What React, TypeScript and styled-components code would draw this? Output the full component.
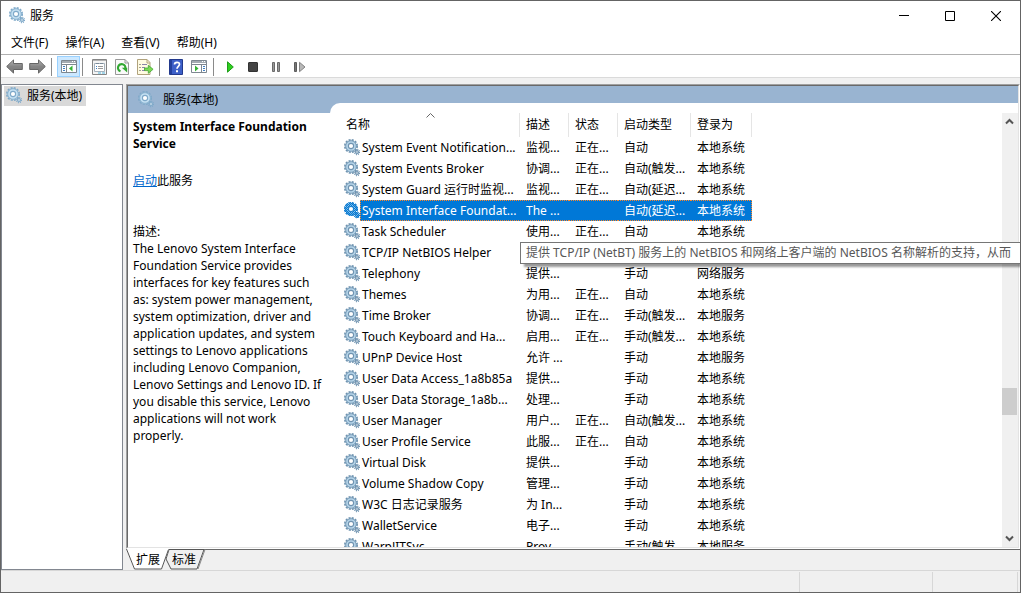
import React from "react";
import styled, { createGlobalStyle, css } from "styled-components";

const GlobalStyle = createGlobalStyle`
  * { box-sizing: border-box; }
  body {
    margin: 0;
    overflow: hidden;
    background: #f0f0f0;
    color: #000;
    font: 12px/17px "Noto Sans", "Noto Sans CJK SC", sans-serif;
  }
  button {
    margin: 0;
    padding: 0;
    border: 0;
    background: none;
    color: inherit;
    font: inherit;
  }
`;

const Window = styled.div`
  position: relative;
  display: flex;
  flex-direction: column;
  height: 100vh;
  overflow: hidden;
  border: 1px solid #646464;
`;

const TitleBar = styled.header`
  display: flex;
  align-items: center;
  height: 30px;
  padding: 0 1px 1px 8px;
  background: #fff;
`;

const Title = styled.h1`
  flex: 1;
  margin: 0 0 0 5px;
  font-size: 12px;
  font-weight: 400;
`;

const CaptionButton = styled.button`
  display: grid;
  place-items: center;
  width: 46px;
  height: 29px;
`;

const MenuBar = styled.nav`
  display: flex;
  gap: 1px;
  height: 24px;
  padding-left: 2px;
  background: #fff;
  border-bottom: 1px solid #b0b0b0;
`;

const MenuItem = styled.button`
  padding: 0 8px;
`;

const Toolbar = styled.div`
  display: flex;
  height: 23px;
  padding: 1px 0 0 2px;
  background: #fff;
  border-bottom: 1px solid #dadada;
`;

const ToolButton = styled.button<{ $pressed?: boolean }>`
  display: grid;
  place-items: center;
  width: 23px;
  height: 21px;
  padding-right: 1px;
  ${(p) =>
    p.$pressed &&
    css`
      padding-right: 0;
      background: #cce8ff;
      border: 1px solid #99d1ff;
    `}
`;

const Separator = styled.span`
  width: 8px;
  border-left: 2px solid transparent;
  &::before {
    content: "";
    display: block;
    width: 1px;
    height: 18px;
    margin-top: 2px;
    background: #8a8a8a;
  }
`;

const Main = styled.div`
  flex: 1;
  display: flex;
  gap: 3px;
  min-height: 0;
  padding-top: 6px;
`;

const Tree = styled.nav`
  width: 122px;
  padding: 1px 2px;
  background: #fff;
  border: 1px solid #828790;
`;

const TreeItem = styled.button`
  display: flex;
  align-items: center;
  gap: 5px;
  height: 20px;
  padding: 0 4px 1px 2px;
  background: #d9d9d9;
`;

const Content = styled.div`
  flex: 1;
  display: flex;
  flex-direction: column;
  min-width: 0;
`;

const Frame = styled.section`
  flex: 1;
  display: flex;
  min-height: 0;
  background: #fff;
  border: 1px solid;
  border-color: #a0a0a0 #fff #fff #a0a0a0;
`;

const FrameInner = styled.div`
  flex: 1;
  display: flex;
  min-width: 0;
  border: 1px solid;
  border-color: #696969 #e3e3e3 #e3e3e3 #696969;
`;

const Details = styled.aside`
  width: 202px;
  flex: none;
`;

const DetailsHeader = styled.div`
  display: flex;
  align-items: center;
  gap: 9px;
  height: 27px;
  padding-left: 10px;
  background: #99b4d1;
`;

const DetailsBody = styled.div`
  padding: 5px 0 0 5px;
`;

const ServiceName = styled.h2`
  margin: 0 0 20px;
  font-size: 12px;
  font-weight: 700;
`;

const Action = styled.p`
  margin: 0 0 34px;
  a {
    color: #0066cc;
  }
`;

const Description = styled.p`
  margin: 0;
  white-space: pre-line;
`;

const ListArea = styled.div`
  flex: 1;
  display: flex;
  min-width: 0;
  padding-top: 17px;
  background: #99b4d1;
`;

const ListSheet = styled.div`
  flex: 1;
  display: flex;
  justify-content: space-between;
  min-width: 0;
  padding: 10px 0 0 10px;
  overflow: hidden;
  background: #fff;
  border-top-left-radius: 10px;
`;

const Table = styled.table`
  width: 412px;
  height: max-content;
  table-layout: fixed;
  border-collapse: separate;
  border-spacing: 0;
`;

const Heading = styled.th`
  position: relative;
  height: 24px;
  padding: 0 0 1px 6px;
  border-right: 1px solid #e5e5e5;
  font-weight: 400;
  text-align: left;
  white-space: nowrap;
`;

const SortMark = styled.svg`
  position: absolute;
  top: 0;
  left: calc(50% - 4px);
`;

const Cell = styled.td`
  height: 21px;
  padding: 0;
`;

const NameCell = styled.div`
  display: flex;
  padding-left: 4px;
`;

const focusDots = "repeating-linear-gradient(90deg, #ff8728 0 1px, #0078d7 1px 2px)";
const focusDotsDown = "repeating-linear-gradient(180deg, #ff8728 0 1px, #0078d7 1px 2px)";

const Label = styled.div<{ $selected?: boolean; $edge?: "left" | "right"; $name?: boolean }>`
  flex: 1;
  height: 21px;
  padding: 2px 0 2px ${(p) => (p.$name ? 2 : 6)}px;
  overflow: hidden;
  white-space: nowrap;
  ${(p) =>
    p.$selected &&
    css`
      color: #fff;
      background:
        ${focusDots} top / 100% 1px no-repeat,
        ${focusDots} bottom / 100% 1px no-repeat,
        ${focusDotsDown} ${p.$edge ?? "left"} / ${p.$edge ? "1px" : "0"} 100% no-repeat,
        #0078d7;
    `}
`;

const ScrollBar = styled.div`
  display: flex;
  flex-direction: column;
  width: 16px;
  background: #f0f0f0;
`;

const ScrollArrow = styled.button`
  display: grid;
  place-items: center;
  width: 15px;
  height: 17px;
`;

const ScrollSpace = styled.div<{ $share: number }>`
  flex: ${(p) => p.$share} 1 0;
`;

const ScrollThumb = styled.div`
  width: 15px;
  height: 27px;
  background: #cdcdcd;
`;

const Tabs = styled.div`
  position: relative;
  display: flex;
  gap: 12px;
  height: 21px;
  padding-left: 10px;
`;

const TabShape = styled.svg`
  position: absolute;
  top: 0;
  left: 0;
`;

const TabRule = styled.div`
  position: absolute;
  top: 0;
  left: 42px;
  right: 0;
  height: 1px;
  background: #696969;
`;

const Tab = styled.button`
  position: relative;
`;

const StatusBar = styled.footer`
  display: flex;
  justify-content: flex-end;
  height: 22px;
  padding: 1px 2px 0 0;
  border-top: 1px solid #d7d7d7;
`;

const StatusCell = styled.div<{ $width: number }>`
  width: ${(p) => p.$width}px;
  border-right: 1px solid #d7d7d7;
`;

const Tooltip = styled.div`
  position: absolute;
  top: 241px;
  left: 519px;
  right: -2px;
  height: 22px;
  padding: 1px 0 0 5px;
  overflow: hidden;
  white-space: nowrap;
  background: #fff;
  border: 1px solid #767676;
  color: #575757;
  box-shadow: 4px 3px 2px rgba(0, 0, 0, 0.4);
`;

const GearSvg = styled.svg`
  flex: none;
`;

function Gears({ selected, soft }: { selected?: boolean; soft?: boolean }) {
  const rim = selected ? "#2a86cc" : soft ? "#7fa9c9" : "#6f93b0";
  const face = selected ? "#8cc4ea" : soft ? "#c4e0f2" : "#b4d3e8";
  return (
    <GearSvg width="16" height="21" viewBox="0 0 16 21" aria-hidden="true">
      <defs>
        <pattern id="dither" width="2" height="2" patternUnits="userSpaceOnUse">
          <path d="M0 0h1v1H0zM1 1h1v1H1z" fill="#0078d7" shapeRendering="crispEdges" />
        </pattern>
      </defs>
      <g transform="translate(0 2)">
        <circle cx="7" cy="7" r="6" fill="none" stroke={rim} strokeWidth="2" strokeDasharray="2 1.14" />
        <circle cx="7" cy="7" r="4.1" fill="none" stroke={face} strokeWidth="2.800" />
        <circle cx="7" cy="7" r="5.3" fill="none" stroke={rim} strokeWidth="0.800" />
        <circle cx="7" cy="7" r="2.600" fill="#fff" stroke={rim} strokeWidth="1.100" />
        <circle cx="13" cy="13" r="2.500" fill="none" stroke={rim} strokeWidth="1.400" strokeDasharray="1 0.960" />
        <circle cx="13" cy="13" r="1.400" fill="#fff" stroke={rim} strokeWidth="1.300" />
        {selected && (
          <>
            <circle cx="7" cy="7" r="4.800" fill="none" stroke="url(#dither)" strokeWidth="4.400" />
            <circle cx="13" cy="13" r="3" fill="url(#dither)" />
          </>
        )}
      </g>
    </GearSvg>
  );
}

function Arrow({ flip }: { flip?: boolean }) {
  return (
    <svg width="17" height="15" viewBox="0 0 17 15" aria-hidden="true">
      <defs>
        <linearGradient id="steel" x1="0" y1="0" x2="0" y2="1">
          <stop offset="0" stopColor="#b5b5b5" />
          <stop offset="0.5" stopColor="#858585" />
          <stop offset="1" stopColor="#777" />
        </linearGradient>
      </defs>
      <path
        transform={flip ? "translate(17 0) scale(-1 1)" : undefined}
        d="M.7 7.5 7.5.9v3.6h8.800v6H7.500v3.600z"
        fill="url(#steel)"
        stroke="#666"
      />
    </svg>
  );
}

function ConsolePane({ right }: { right?: boolean }) {
  return (
    <svg width="16" height="13" viewBox="0 0 16 13" aria-hidden="true">
      <path d="M.5.5h15v12H.5z" fill="#fff" stroke="#7d8790" />
      <path d="M1 1h14v2H1z" fill="#a3abb2" />
      <path d="M11 1.500h1M13 1.500h1" stroke="#fff" />
      <path d="M1 4.500h14" stroke="#7d8790" />
      {right ? (
        <>
          <path d="M10.500 5v7" stroke="#7d8790" />
          <path d="M12 6.500h2M12 8.500h2M12 10.500h2" stroke="#3f7fc4" />
          <path d="M4 5.600v5.800L7.500 8.500z" fill="#35b335" />
        </>
      ) : (
        <>
          <path d="M5.500 5v7" stroke="#7d8790" />
          <path d="M2 6.500h2M2 8.500h2M2 10.500h2" stroke="#3f7fc4" />
          <path d="M11.500 5.600v5.800L8 8.500z" fill="#35b335" />
        </>
      )}
    </svg>
  );
}

function PropertiesIcon() {
  return (
    <svg width="15" height="16" viewBox="0 0 15 16" aria-hidden="true">
      <path d="M.5.5h14v15H.5z" fill="#f4f4f4" stroke="#858585" />
      <path d="M1 1.500h13" stroke="#b4b4b4" />
      <path d="M2.500 4.500h10v8h-10z" fill="#fff" stroke="#a6b2bc" />
      <path d="M4 4.500h3M8 4.500h3" stroke="#7a8a98" />
      <path d="M4 7.500h1M4 9.500h1" stroke="#3f7fc4" />
      <path d="M6 7.500h5M6 9.500h5" stroke="#999" />
      <path d="M6 14h3M10 14h3" stroke="#52b6dd" />
    </svg>
  );
}

function RefreshIcon() {
  return (
    <svg width="14" height="16" viewBox="0 0 14 16" aria-hidden="true">
      <path d="M.5.5h9.500l3.500 3.500v11.500H.5z" fill="#fafafa" stroke="#999" />
      <path d="M10 .5V4h3.500" fill="none" stroke="#999" />
      <path d="M5.500 12.300A3.700 3.700 0 1 1 10.300 9.600" fill="none" stroke="#32a832" strokeWidth="2.200" />
      <path d="M6.800 8.800h5.400v4.800z" fill="#32a832" />
    </svg>
  );
}

function ExportIcon() {
  return (
    <svg width="17" height="16" viewBox="0 0 17 16" aria-hidden="true">
      <path d="M.5.5h9.500l3 3v12H.5z" fill="#fffbe2" stroke="#b0a27c" />
      <path d="M10 .5V4h3" fill="none" stroke="#b0a27c" />
      <path d="M2.500 5.500h1M2.500 8.500h1M2.500 11.500h1" stroke="#444" />
      <path d="M5 5.500h5M5 8.500h3M5 11.500h3" stroke="#8a84a8" />
      <path d="M7.500 9h3.800V6.300l4.800 4-4.800 4v-2.700H7.500z" fill="#7cdb54" stroke="#3fa532" strokeWidth="0.800" />
    </svg>
  );
}

function HelpIcon() {
  return (
    <svg width="14" height="16" viewBox="0 0 14 16" aria-hidden="true">
      <path d="M.5.5h13v15H.5z" fill="#3c5fc8" stroke="#22398c" />
      <path d="M1 1h2v14H1z" fill="#233f9c" />
      <path d="M5.500 5.600c0-3 5-3 5-.3 0 2-2.500 2-2.500 4.500" fill="none" stroke="#fff" strokeWidth="1.700" />
      <path d="M7 11.300h2v2H7z" fill="#fff" />
    </svg>
  );
}

function MediaIcon({ kind }: { kind: "play" | "stop" | "pause" | "restart" }) {
  return (
    <svg width="14" height="14" viewBox="0 0 14 14" aria-hidden="true">
      {kind === "play" && <path d="M4.500 1.800v10.400L10.300 7z" fill="#2fd01f" stroke="#1f9c1a" />}
      {kind === "stop" && <rect x="2.500" y="2.500" width="9" height="9" rx="0.500" fill="#444" stroke="#333" />}
      {kind === "pause" && <path d="M3.500 2.500h2v9h-2zM8.500 2.500h2v9h-2z" fill="#999" stroke="#6a6a6a" />}
      {kind === "restart" && (
        <>
          <path d="M2.500 2.500h2v9h-2z" fill="#777" stroke="#5c5c5c" />
          <path d="M7.500 2.300v9.400L13 7z" fill="#b8b8b8" stroke="#858585" />
        </>
      )}
    </svg>
  );
}

type Service = [name: string, description: string, status: string, startup: string, logon: string];

const LOCAL = "本地系统";
const services: Service[] = [
  ["System Event Notification...", "监视...", "正在...", "自动", LOCAL],
  ["System Events Broker", "协调...", "正在...", "自动(触发...", LOCAL],
  ["System Guard 运行时监视...", "监视...", "正在...", "自动(延迟...", LOCAL],
  ["System Interface Foundat...", "The ...", "", "自动(延迟...", LOCAL],
  ["Task Scheduler", "使用...", "正在...", "自动", LOCAL],
  ["TCP/IP NetBIOS Helper", "", "", "", ""],
  ["Telephony", "提供...", "", "手动", "网络服务"],
  ["Themes", "为用...", "正在...", "自动", LOCAL],
  ["Time Broker", "协调...", "正在...", "手动(触发...", "本地服务"],
  ["Touch Keyboard and Ha...", "启用...", "正在...", "手动(触发...", LOCAL],
  ["UPnP Device Host", "允许 ...", "", "手动", "本地服务"],
  ["User Data Access_1a8b85a", "提供...", "", "手动", LOCAL],
  ["User Data Storage_1a8b...", "处理...", "", "手动", LOCAL],
  ["User Manager", "用户...", "正在...", "自动(触发...", LOCAL],
  ["User Profile Service", "此服...", "正在...", "自动", LOCAL],
  ["Virtual Disk", "提供...", "", "手动", LOCAL],
  ["Volume Shadow Copy", "管理...", "", "手动", LOCAL],
  ["W3C 日志记录服务", "为 In...", "", "手动", LOCAL],
  ["WalletService", "电子...", "", "手动", LOCAL],
  ["WarpJITSvc", "Prov...", "", "手动(触发...", "本地服务"],
];
const SELECTED = 3;

const description = `The Lenovo System Interface
Foundation Service provides
interfaces for key features such
as: system power management,
system optimization, driver and
application updates, and system
settings to Lenovo applications
including Lenovo Companion,
Lenovo Settings and Lenovo ID. If
you disable this service, Lenovo
applications will not work
properly.`;

export default function App() {
  return (
    <>
      <GlobalStyle />
      <Window>
        <TitleBar>
          <Gears soft />
          <Title>服务</Title>
          <CaptionButton aria-label="最小化">
            <svg width="10" height="11"><path d="M0 5.500h10" stroke="#000" /></svg>
          </CaptionButton>
          <CaptionButton aria-label="最大化">
            <svg width="10" height="10"><path d="M.5.5h9v9h-9z" fill="none" stroke="#000" /></svg>
          </CaptionButton>
          <CaptionButton aria-label="关闭">
            <svg width="10" height="10"><path d="M0 0l10 10M10 0L0 10" stroke="#000" strokeWidth="1.100" /></svg>
          </CaptionButton>
        </TitleBar>
        <MenuBar>
          {["文件(F)", "操作(A)", "查看(V)", "帮助(H)"].map((label) => (
            <MenuItem key={label}>{label}</MenuItem>
          ))}
        </MenuBar>
        <Toolbar>
          <ToolButton aria-label="后退"><Arrow /></ToolButton>
          <ToolButton aria-label="前进"><Arrow flip /></ToolButton>
          <Separator />
          <ToolButton $pressed aria-label="显示控制台树"><ConsolePane /></ToolButton>
          <Separator />
          <ToolButton aria-label="属性"><PropertiesIcon /></ToolButton>
          <ToolButton aria-label="刷新"><RefreshIcon /></ToolButton>
          <ToolButton aria-label="导出列表"><ExportIcon /></ToolButton>
          <Separator />
          <ToolButton aria-label="帮助"><HelpIcon /></ToolButton>
          <ToolButton aria-label="显示操作窗格"><ConsolePane right /></ToolButton>
          <Separator />
          <ToolButton aria-label="启动"><MediaIcon kind="play" /></ToolButton>
          <ToolButton aria-label="停止"><MediaIcon kind="stop" /></ToolButton>
          <ToolButton aria-label="暂停"><MediaIcon kind="pause" /></ToolButton>
          <ToolButton aria-label="重新启动"><MediaIcon kind="restart" /></ToolButton>
        </Toolbar>
        <Main>
          <Tree>
            <TreeItem><Gears soft />服务(本地)</TreeItem>
          </Tree>
          <Content>
            <Frame>
              <FrameInner>
                <Details>
                  <DetailsHeader><Gears soft />服务(本地)</DetailsHeader>
                  <DetailsBody>
                    <ServiceName>System Interface Foundation Service</ServiceName>
                    <Action><a href="#start">启动</a>此服务</Action>
                    <Description>描述:</Description>
                    <Description>{description}</Description>
                  </DetailsBody>
                </Details>
                <ListArea>
                  <ListSheet>
                    <Table>
                      <colgroup>
                        <col width="180" />
                        <col width="49" />
                        <col width="49" />
                        <col width="73" />
                        <col width="61" />
                      </colgroup>
                      <thead>
                        <tr>
                          <Heading>
                            名称
                            <SortMark width="9" height="5">
                              <path d="M.5 4.500l4-4 4 4" fill="none" stroke="#666" />
                            </SortMark>
                          </Heading>
                          <Heading>描述</Heading>
                          <Heading>状态</Heading>
                          <Heading>启动类型</Heading>
                          <Heading>登录为</Heading>
                        </tr>
                      </thead>
                      <tbody>
                        {services.map(([name, ...rest], row) => {
                          const selected = row === SELECTED;
                          return (
                            <tr key={name} aria-selected={selected}>
                              <Cell>
                                <NameCell>
                                  <Gears selected={selected} />
                                  <Label $name $selected={selected} $edge="left">
                                    {name}
                                  </Label>
                                </NameCell>
                              </Cell>
                              {rest.map((text, column) => (
                                <Cell key={column}>
                                  <Label $selected={selected} $edge={column === 3 ? "right" : undefined}>
                                    {text}
                                  </Label>
                                </Cell>
                              ))}
                            </tr>
                          );
                        })}
                      </tbody>
                    </Table>
                    <ScrollBar>
                      <ScrollArrow aria-label="向上滚动">
                        <svg width="9" height="7"><path d="M1 5.500l3.500-3.500 3.500 3.500" fill="none" stroke="#555" strokeWidth="2" /></svg>
                      </ScrollArrow>
                      <ScrollSpace $share={258} />
                      <ScrollThumb />
                      <ScrollSpace $share={115} />
                      <ScrollArrow aria-label="向下滚动">
                        <svg width="9" height="7"><path d="M1 1.500l3.500 3.500 3.500-3.500" fill="none" stroke="#555" strokeWidth="2" /></svg>
                      </ScrollArrow>
                    </ScrollBar>
                  </ListSheet>
                </ListArea>
              </FrameInner>
            </Frame>
            <Tabs>
              <TabRule />
              <TabShape width="80" height="21" aria-hidden="true">
                <path d="M40 10l3-9.500h35l-7 19.500H45z" fill="#f0f0f0" stroke="#555" />
                <path d="M79 .5l-7 19.500" stroke="#888" />
                <path d="M0 0l8 20h28l7-20z" fill="#fff" />
                <path d="M.5 0l8 20h27l7-19.500" fill="none" stroke="#555" />
              </TabShape>
              <Tab>扩展</Tab>
              <Tab>标准</Tab>
            </Tabs>
          </Content>
        </Main>
        <StatusBar>
          <StatusCell $width={133} />
          <StatusCell $width={133} />
          <StatusCell $width={85} />
        </StatusBar>
        <Tooltip role="tooltip">
          提供 TCP/IP (NetBT) 服务上的 NetBIOS 和网络上客户端的 NetBIOS 名称解析的支持，从而
        </Tooltip>
      </Window>
    </>
  );
}
